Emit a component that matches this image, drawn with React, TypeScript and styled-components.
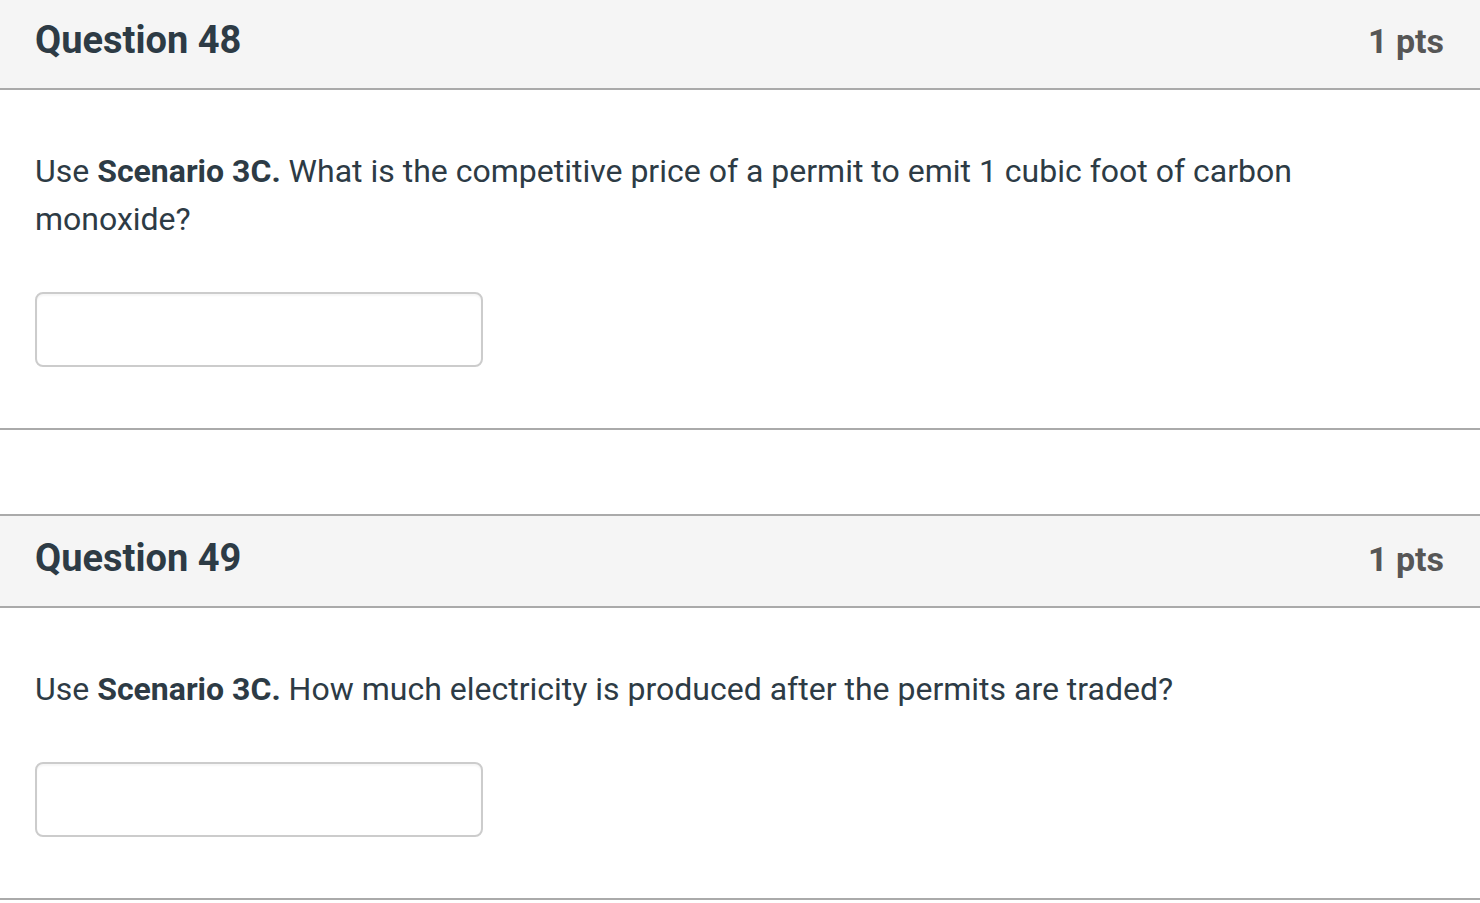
import styled, { createGlobalStyle } from 'styled-components';

const GlobalStyle = createGlobalStyle`
	html, body {
		margin: 0;
		padding: 0;
		background: #ffffff;
	}
	body {
		font-family: Roboto, 'Liberation Sans', Arial, sans-serif;
		color: #2d3b45;
	}
`;

type Question = {
	number: number;
	points: number;
	lead: string;
	text: string;
};

const questions: Question[] = [
	{
		number: 48,
		points: 1,
		lead: 'Scenario 3C.',
		text: 'What is the competitive price of a permit to emit 1 cubic foot of carbon monoxide?',
	},
	{
		number: 49,
		points: 1,
		lead: 'Scenario 3C.',
		text: 'How much electricity is produced after the permits are traded?',
	},
];

export default function App() {
	return (
		<>
			<GlobalStyle />
			<QuizList>
				{questions.map((q) => (
					<QuestionCard key={q.number}>
						<Header>
							<Title>Question {q.number}</Title>
							<Points>{q.points} pts</Points>
						</Header>
						<Body>
							<Prompt>
								Use <strong>{q.lead}</strong> {q.text}
							</Prompt>
							<AnswerInput type='text' aria-label={`Answer for question ${q.number}`} />
						</Body>
					</QuestionCard>
				))}
			</QuizList>
		</>
	);
}

// the page is scrolled a little, so the first card's top edge sits above the frame
const QuizList = styled.div`
	display: flex;
	flex-direction: column;
	gap: 84px;
	margin-top: -4px;
	width: 100%;
`;

const QuestionCard = styled.div`
	display: flex;
	flex-direction: column;
	border-top: 2px solid #aaaaaa;
	border-bottom: 2px solid #aaaaaa;
	background: #ffffff;
`;

const Header = styled.div`
	display: flex;
	justify-content: space-between;
	align-items: center;
	box-sizing: border-box;
	height: 92px;
	padding: 0 36px 6px 35px;
	background: #f5f5f5;
	border-bottom: 2px solid #aaaaaa;
`;

const Title = styled.h2`
	margin: 0;
	font-size: 38px;
	font-weight: 700;
	color: #2d3b45;
	line-height: 1;
`;

const Points = styled.div`
	font-size: 34px;
	font-weight: 700;
	color: #565656;
	line-height: 1;
	padding-top: 2px;
`;

const Body = styled.div`
	display: flex;
	flex-direction: column;
	align-items: flex-start;
	gap: 49px;
	padding: 57px 36px 61px 35px;
`;

const Prompt = styled.p`
	margin: 0;
	font-size: 32px;
	line-height: 48px;
	color: #2d3b45;
	max-width: 1290px;

	strong {
		font-weight: 700;
	}
`;

const AnswerInput = styled.input`
	box-sizing: border-box;
	width: 448px;
	height: 75px;
	margin: 0;
	border: 2px solid #cccccc;
	border-radius: 8px;
	background: #ffffff;
	box-shadow: inset 0 2px 2px rgba(0, 0, 0, 0.04);
	font-family: inherit;
	font-size: 32px;
	padding: 0 16px;
	outline: none;
`;
